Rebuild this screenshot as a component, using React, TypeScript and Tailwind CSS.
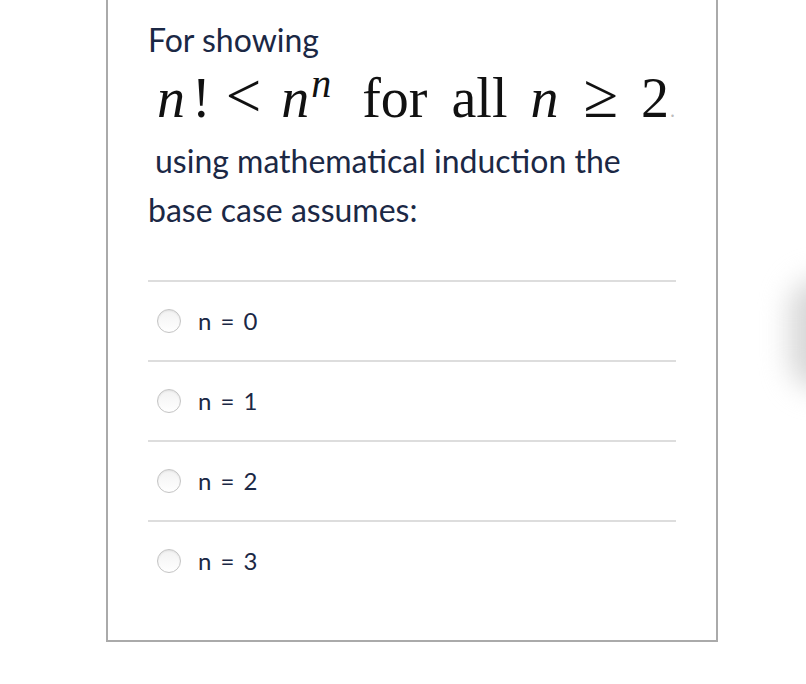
import * as React from "react";

const options = ["n = 0", "n = 1", "n = 2", "n = 3"];

function Radio() {
  return (
    <span className="block h-[24px] w-[24px] shrink-0 rounded-full border border-[#c4c4c4] bg-gradient-to-b from-[#f2f2f2] to-white shadow-[inset_0_1px_2px_rgba(0,0,0,0.08)]" />
  );
}

export default function App() {
  return (
    <div className="relative h-[684px] w-[806px] overflow-hidden bg-white font-['Lato',sans-serif] text-[#1b2845]">
      <div className="ml-[106px] h-[642px] w-[612px] border-2 border-t-0 border-[#aaaaaa] px-[40px] pt-[15px]">
        <p className="text-[32px] leading-[49px]">For showing</p>

        {/* inline math, rendered as plain serif text */}
        <div className="h-[72px] whitespace-nowrap pl-[9px] font-['Liberation_Serif',serif] text-[56px] leading-[68px] text-[#111]">
          <i>n</i>
          <span className="ml-[7px]">!</span>
          <span className="ml-[15px] text-[63px] leading-none">&lt;</span>
          <i className="ml-[20px]">n</i>
          <span className="ml-[2px] align-[20px] text-[40px] leading-none italic">n</span>
          <span className="ml-[31px]">for</span>
          <span className="ml-[24px]">all</span>
          <i className="ml-[23px]">n</i>
          <span className="ml-[25px] text-[63px] leading-none">≥</span>
          <span className="ml-[23px]">2</span>
          <span className="ml-[1px] text-[20px] text-[#bbb]">.</span>
        </div>

        <p className="text-[32px] leading-[49px]">
          <span className="pl-[7px]">using mathematical induction the</span>
          <br />
          base case assumes:
        </p>

        <div className="mt-[46px]">
          {options.map((o) => (
            <label
              key={o}
              className="flex h-[80px] items-center gap-[17px] border-t-2 border-[#dddddd] pl-[9px]"
            >
              <Radio />
              <span className="text-[24px] [word-spacing:3px]">{o}</span>
            </label>
          ))}
        </div>
      </div>

      <div className="absolute right-[-48px] top-[278px] h-[112px] w-[64px] rounded-full bg-[#d6d6d6] blur-[14px]" />
    </div>
  );
}
